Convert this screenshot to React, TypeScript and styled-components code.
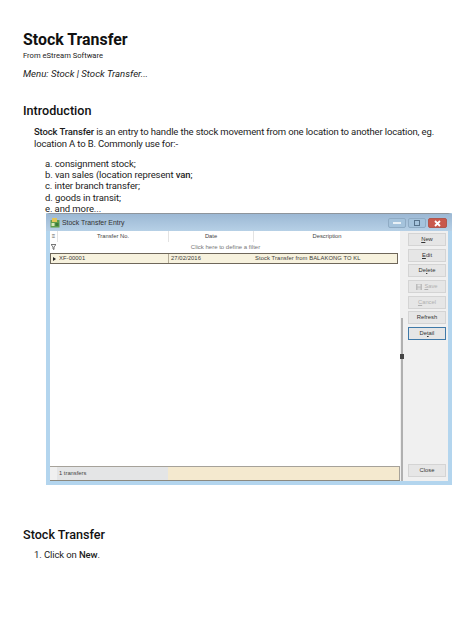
import React from 'react';
import styled, { createGlobalStyle } from 'styled-components';

const GlobalStyle = createGlobalStyle`
  html, body {
    margin: 0;
    padding: 0;
    background: #fff;
  }
  body {
    font-family: 'Roboto', 'Liberation Sans', sans-serif;
    color: #1c1c1c;
  }
`;

const Page = styled.div`
  width: 474px;
  height: 632px;
  padding: 30px 22px 0 23px;
  box-sizing: border-box;
  overflow: hidden;
`;

const Title = styled.h1`
  margin: 0;
  font-size: 15.9px;
  line-height: 20px;
  font-weight: 700;
  color: #111;
`;

const Source = styled.div`
  margin-top: 1px;
  font-size: 7.6px;
  line-height: 10px;
`;

const MenuPath = styled.div`
  margin-top: 7px;
  font-size: 9.6px;
  line-height: 12px;
  font-style: italic;
`;

const Heading = styled.h2<{ $top: number }>`
  margin: ${(p) => p.$top}px 0 0;
  font-size: 12.6px;
  line-height: 16px;
  font-weight: 500;
  color: #111;
`;

const Para = styled.div`
  margin: 7px 0 0 11px;
  font-size: 9.5px;
  line-height: 12px;
  letter-spacing: -0.14px;
`;

const ParaLine = styled.div`
  white-space: nowrap;
`;

const LetterList = styled.div`
  margin: 8px 0 0 22px;
  font-size: 9.5px;
  line-height: 11.2px;
  letter-spacing: -0.1px;
`;

const Window = styled.div`
  margin: -1px 0 0 23px;
  width: 406px;
  height: 272px;
  box-sizing: border-box;
  border: 4px solid #b3d5ee;
  border-top: 1px solid #8e959c;
  background: #b3d5ee;
  display: flex;
  flex-direction: column;
`;

const TitleBar = styled.div`
  height: 17px;
  margin: 0 -4px;
  padding: 0 5px 0 4px;
  background: linear-gradient(#9cb8d4, #b6d0e6);
  display: flex;
  align-items: center;
  gap: 2px;
  font-family: 'Liberation Sans', sans-serif;
  font-size: 6.9px;
  color: #333;
`;

const Caption = styled.span`
  flex: 1;
`;

const CtrlButton = styled.div<{ $close?: boolean }>`
  width: ${(p) => (p.$close ? 19 : 18)}px;
  height: 10px;
  margin-top: 1px;
  border-radius: 2px;
  background: ${(p) => (p.$close ? '#c9584c' : '#a5c3dc')};
  border: 1px solid ${(p) => (p.$close ? '#b0574e' : '#8fabc4')};
  box-sizing: border-box;
  display: flex;
  align-items: center;
  justify-content: center;
`;

const Body = styled.div`
  flex: 1;
  display: flex;
  min-height: 0;
`;

const GridPane = styled.div`
  width: 350px;
  background: #fff;
  display: flex;
  flex-direction: column;
  font-family: 'Liberation Sans', sans-serif;
  font-size: 5.8px;
  color: #444;
`;

const HeaderRow = styled.div`
  height: 11px;
  display: grid;
  grid-template-columns: 7px 111px 85px 1fr;
  align-items: center;
  text-align: center;
`;

const HeaderCell = styled.div`
  height: 100%;
  line-height: 11px;
  border-left: 1px solid #e3e3e3;
  box-sizing: border-box;
`;

const MenuGlyph = styled.div`
  font-size: 6px;
  line-height: 11px;
  color: #555;
`;

const FilterRow = styled.div`
  height: 10px;
  display: flex;
  align-items: center;
  font-size: 6px;
  color: #777;
`;

const FilterIcon = styled.div`
  width: 7px;
  display: flex;
  justify-content: center;
`;

const FilterHint = styled.div`
  flex: 1;
  text-align: center;
  padding-right: 6px;
`;

const DataRow = styled.div`
  height: 11px;
  margin-top: 1px;
  width: 348px;
  box-sizing: border-box;
  background: #f7f2de;
  border: 1px solid #6f675a;
  display: grid;
  grid-template-columns: 6px 111px 85px 1fr;
  align-items: center;
  line-height: 9px;
  color: #3c3c3c;
`;

const Pointer = styled.div`
  width: 0;
  height: 0;
  margin-left: 2px;
  border-left: 3px solid #222;
  border-top: 2.5px solid transparent;
  border-bottom: 2.5px solid transparent;
`;

const DataCell = styled.div<{ $divider?: boolean }>`
  padding-left: 2px;
  white-space: nowrap;
  letter-spacing: 0.1px;
  ${(p) => p.$divider && 'border-left: 1px solid #b5ad98;'}
`;

const GridSpace = styled.div`
  flex: 1;
`;

const StatusBar = styled.div`
  height: 15px;
  display: grid;
  grid-template-columns: 7px 111px 1fr;
  border-top: 1px solid #a6a29a;
  border-bottom: 1px solid #8b8980;
  box-sizing: border-box;
  line-height: 13px;
`;

const StatusEdge = styled.div`
  background: #f0f0f0;
`;

const StatusCount = styled.div`
  background: #e4e5e6;
  padding-left: 2px;
`;

const StatusFill = styled.div`
  background: #f4e9cf;
  border-right: 1px solid #a6a29a;
`;

const Splitter = styled.div`
  width: 8px;
  background: #f0f0f0;
  display: flex;
  flex-direction: column;
  align-items: flex-start;
`;

const SplitLine = styled.div`
  margin-top: 87px;
  flex: 1;
  width: 2px;
  margin-left: 1px;
  background: #b0b0b0;
  position: relative;
`;

const SplitArrow = styled.div`
  position: absolute;
  left: -1px;
  top: 36px;
  width: 4px;
  height: 5px;
  background: #444;
`;

const SideBar = styled.div`
  flex: 1;
  background: #f0f0f0;
  padding: 2px 2px 4px 0;
  display: flex;
  flex-direction: column;
  gap: 2.7px;
  font-family: 'Liberation Sans', sans-serif;
`;

const ActionButton = styled.div<{ $disabled?: boolean; $focused?: boolean }>`
  height: 13px;
  box-sizing: border-box;
  background: #e6e6e6;
  border: 1px solid ${(p) => (p.$focused ? '#3f79a8' : '#d4d4d4')};
  font-size: 5.8px;
  line-height: 11px;
  display: flex;
  align-items: center;
  justify-content: center;
  gap: 2px;
  white-space: pre;
  color: ${(p) => (p.$disabled ? '#b0b0b0' : '#333')};
  span {
    text-decoration: underline;
  }
`;

const SidePush = styled.div`
  flex: 1;
`;

const Steps = styled.div`
  margin: 6px 0 0 11px;
  font-size: 9.5px;
  line-height: 12px;
  letter-spacing: -0.1px;
  b {
    font-weight: 500;
  }
`;

const Strong = styled.b`
  font-weight: 500;
`;

const AppIcon = () => (
  <svg width="10" height="11" viewBox="0 0 10 11">
    <rect x="0.5" y="3" width="9" height="7.5" fill="#5f9e4a" />
    <rect x="2" y="1" width="5" height="4" fill="#e2c65a" />
    <rect x="1.5" y="6" width="3" height="3" fill="#d7e8b8" />
    <rect x="5.5" y="6" width="3" height="3" fill="#3b7d3a" />
  </svg>
);

const FunnelIcon = () => (
  <svg width="5" height="6" viewBox="0 0 5 6">
    <path d="M0 0.5h5L3 3v2.5L2 5V3z" fill="none" stroke="#555" strokeWidth="0.8" />
  </svg>
);

const FloppyIcon = () => (
  <svg width="6" height="6" viewBox="0 0 6 6">
    <rect width="6" height="6" fill="#bcbcbc" />
    <rect x="1.5" y="0.5" width="3" height="2" fill="#e6e6e6" />
    <rect x="1.5" y="3.5" width="3" height="2.5" fill="#dadada" />
  </svg>
);

const App: React.FC = () => {
  return (
    <>
      <GlobalStyle />
      <Page>
        <Title>Stock Transfer</Title>
        <Source>From eStream Software</Source>
        <MenuPath>Menu: Stock | Stock Transfer...</MenuPath>
        <Heading $top={23}>Introduction</Heading>
        <Para>
          <ParaLine>
            <Strong>Stock Transfer</Strong> is an entry to handle the stock movement from one location to another location, eg.
          </ParaLine>
          <ParaLine>location A to B. Commonly use for:-</ParaLine>
        </Para>
        <LetterList>
          <div>a. consignment stock;</div>
          <div>b. van sales (location represent <Strong>van</Strong>;</div>
          <div>c. inter branch transfer;</div>
          <div>d. goods in transit;</div>
          <div>e. and more...</div>
        </LetterList>
        <Window>
          <TitleBar>
            <AppIcon />
            <Caption>Stock Transfer Entry</Caption>
            <CtrlButton>
              <svg width="8" height="3" viewBox="0 0 8 3"><rect width="8" height="2" fill="#e8f0f6" /></svg>
            </CtrlButton>
            <CtrlButton>
              <svg width="6" height="6" viewBox="0 0 6 6"><rect x="0.5" y="0.5" width="5" height="5" fill="none" stroke="#56718a" /></svg>
            </CtrlButton>
            <CtrlButton $close>
              <svg width="7" height="7" viewBox="0 0 7 7"><path d="M1 1l5 5M6 1l-5 5" stroke="#fff" strokeWidth="1.8" /></svg>
            </CtrlButton>
          </TitleBar>
          <Body>
            <GridPane>
              <HeaderRow>
                <MenuGlyph>≡</MenuGlyph>
                <HeaderCell>Transfer No.</HeaderCell>
                <HeaderCell>Date</HeaderCell>
                <HeaderCell>Description</HeaderCell>
              </HeaderRow>
              <FilterRow>
                <FilterIcon><FunnelIcon /></FilterIcon>
                <FilterHint>Click here to define a filter</FilterHint>
              </FilterRow>
              <DataRow>
                <Pointer />
                <DataCell>XF-00001</DataCell>
                <DataCell $divider>27/02/2016</DataCell>
                <DataCell>Stock Transfer from BALAKONG TO KL</DataCell>
              </DataRow>
              <GridSpace />
              <StatusBar>
                <StatusEdge />
                <StatusCount>1 transfers</StatusCount>
                <StatusFill />
              </StatusBar>
            </GridPane>
            <Splitter>
              <SplitLine>
                <SplitArrow />
              </SplitLine>
            </Splitter>
            <SideBar>
              <ActionButton><div><span>N</span>ew</div></ActionButton>
              <ActionButton><div><span>E</span>dit</div></ActionButton>
              <ActionButton><div>De<span>l</span>ete</div></ActionButton>
              <ActionButton $disabled><FloppyIcon /><div><span>S</span>ave</div></ActionButton>
              <ActionButton $disabled><div><span>C</span>ancel</div></ActionButton>
              <ActionButton><div>Refresh</div></ActionButton>
              <ActionButton $focused><div>De<span>t</span>ail</div></ActionButton>
              <SidePush />
              <ActionButton><div>Close</div></ActionButton>
            </SideBar>
          </Body>
        </Window>
        <Heading $top={42}>Stock Transfer</Heading>
        <Steps>1. Click on <b>New</b>.</Steps>
      </Page>
    </>
  );
};

export default App;
